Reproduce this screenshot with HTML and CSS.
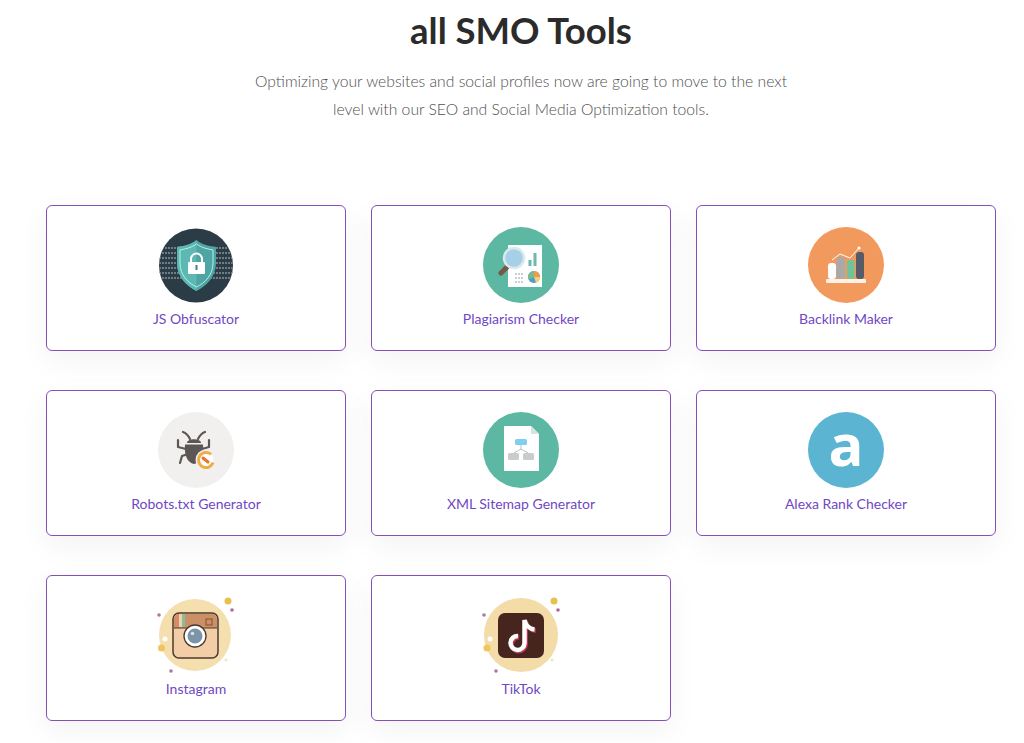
FILE: index.html
```html
<!DOCTYPE html>
<html lang="en">
  <head>
    <meta charset="utf-8" />
    <title>all SMO Tools</title>
    <link rel="stylesheet" href="styles.css">
  </head>
  <body>
    <div class="container">
      <div class="header">
        <h1>all SMO Tools</h1>
        <p>Optimizing your websites and social profiles now are going to move to the next<br />level with our SEO and Social Media Optimization tools.</p>
      </div>

      <div class="content">
        <a class="card" href="#">
          <svg class="icon" viewBox="0 0 80 80">
            <defs><clipPath id="disc"><circle cx="40" cy="40.5" r="37" /></clipPath></defs>
            <circle cx="40" cy="40.5" r="37" fill="#2b3c47" />
            <g clip-path="url(#disc)" stroke="#6f7c84" stroke-width="2" stroke-dasharray="2 1">
              <path d="M3 23H77M3 28H77M3 33H77M3 38H77M3 43H77M3 48H77M3 53H77" />
            </g>
            <path d="M40.5 15 C46 20 54 21 60 22 V38 C60 52 50 61 40.5 66 C31 61 21 52 21 38 V22 C27 21 35 20 40.5 15Z" fill="#4fa5a3" />
            <path d="M40.5 15 C35 20 27 21 21 22 V38 C21 52 31 61 40.5 66Z" fill="#5cb8b3" />
            <path d="M40.5 19 C46 23 52 24 57 25 V38 C57 50 49 58 40.5 62 C32 58 24 50 24 38 V25 C29 24 35 23 40.5 19Z" fill="none" stroke="#b5f0ea" stroke-width="1" />
            <path d="M35 37 V34 a5.5 5.5 0 0 1 11 0 V37" fill="none" stroke="#fff" stroke-width="2" />
            <rect x="32" y="37" width="17" height="12" rx="1" fill="#fff" />
            <rect x="39.5" y="40" width="2" height="5" fill="#4a7f80" />
          </svg>
          <span>JS Obfuscator</span>
        </a>

        <a class="card" href="#">
          <svg class="icon" viewBox="0 0 80 80">
            <circle cx="40" cy="40" r="38" fill="#5cb8a2" />
            <rect x="27" y="20" width="34" height="42" fill="#fff" />
            <path d="M20 48 L27 41" stroke="#75584a" stroke-width="5" stroke-linecap="round" />
            <circle cx="33" cy="33" r="10" fill="#a6cfe8" stroke="#dbe8ee" stroke-width="2.5" />
            <path d="M49 41V35M54 41V28" stroke="#6fb8ac" stroke-width="3" />
            <path d="M34 49H43M34 53H43M34 57H43" stroke="#b9c2c6" stroke-width="1.5" stroke-dasharray="2 1" />
            <circle cx="53" cy="52" r="6" fill="#4e9ecb" />
            <path d="M53 52V46A6 6 0 0 1 59 52Z" fill="#f09a4e" />
            <path d="M53 52H59A6 6 0 0 1 55 57.6Z" fill="#f3d36b" />
            <path d="M53 52L47.5 54.5A6 6 0 0 1 47 52A6 6 0 0 1 53 46Z" fill="#7cb98c" />
          </svg>
          <span>Plagiarism Checker</span>
        </a>

        <a class="card" href="#">
          <svg class="icon" viewBox="0 0 80 80">
            <circle cx="40" cy="40" r="38" fill="#f29a5e" />
            <rect x="22" y="38" width="8" height="16" rx="3" fill="#fff" />
            <rect x="30.5" y="32" width="8.5" height="22" rx="3" fill="#a9a9a9" />
            <rect x="41" y="35" width="7.5" height="19" rx="3" fill="#6fc59b" />
            <rect x="50" y="27" width="8" height="27" rx="3" fill="#565b67" />
            <rect x="20" y="54" width="40" height="4" rx="1" fill="#fff1e4" />
            <path d="M26 35 L34 29 L44 33 L53 23" fill="none" stroke="#fff" stroke-width="1" />
            <circle cx="53" cy="23" r="1.6" fill="#fff" />
          </svg>
          <span>Backlink Maker</span>
        </a>

        <a class="card" href="#">
          <svg class="icon" viewBox="0 0 80 80">
            <circle cx="40" cy="40" r="38" fill="#f1f0ee" />
            <g fill="none" stroke="#5c5654" stroke-width="2.2" stroke-linecap="round" stroke-linejoin="round">
              <path d="M34 29 C32 25 30 23 27 22" />
              <path d="M42 29 C44 25 46 23 49 22" />
              <path d="M30 39 L22 37 L22 30" />
              <path d="M46 39 L53 37 L53 30" />
              <path d="M32 44 L26 46 L24 53" />
            </g>
            <path d="M31 33 C31 28 45 28 45 33Z" fill="#5c5654" />
            <path d="M29 34.5 H47 C48 44 45 53 38 54 C31 53 28 44 29 34.5Z" fill="#5c5654" />
            <circle cx="50" cy="50" r="10.5" fill="#f1f0ee" />
            <circle cx="50" cy="50" r="7.5" fill="#fff" stroke="#f2ab4a" stroke-width="3" stroke-dasharray="38 9" transform="rotate(20 50 50)" />
            <path d="M47 48 L52 52" stroke="#e5772c" stroke-width="3" stroke-linecap="round" />
          </svg>
          <span>Robots.txt Generator</span>
        </a>

        <a class="card" href="#">
          <svg class="icon" viewBox="0 0 80 80">
            <circle cx="40" cy="40" r="38" fill="#5cb8a2" />
            <path d="M23 16 H50 L58 24 V61 H23Z" fill="#fff" />
            <path d="M50 16 L58 24 H50Z" fill="#d6e4e0" />
            <path d="M40 35 V39 M40 39 L33 43 M40 39 L47 43" stroke="#b8bfc0" stroke-width="1" fill="none" />
            <rect x="34" y="29" width="12" height="6" rx="1.5" fill="#80cff0" />
            <rect x="27" y="43" width="11" height="7" rx="1.5" fill="#c9cccb" />
            <rect x="42" y="43" width="11" height="7" rx="1.5" fill="#c9cccb" />
          </svg>
          <span>XML Sitemap Generator</span>
        </a>

        <a class="card" href="#">
          <div class="alexa">a</div>
          <span>Alexa Rank Checker</span>
        </a>

        <a class="card" href="#">
          <svg class="icon" viewBox="0 0 80 80">
            <circle cx="39" cy="40" r="36" fill="#f5dfae" />
            <circle cx="72" cy="6" r="3.5" fill="#e8c04f" />
            <circle cx="76" cy="15" r="1.8" fill="#b06a93" />
            <circle cx="3" cy="20" r="1.8" fill="#a9799f" />
            <circle cx="9" cy="44" r="2.5" fill="#fff" />
            <circle cx="5.5" cy="53" r="3.5" fill="#eec65c" />
            <circle cx="15" cy="76" r="1.8" fill="#a9799f" />
            <circle cx="70" cy="65" r="1.6" fill="#ece7c9" />
            <rect x="17" y="18" width="45" height="45" rx="6" fill="#f3cda8" stroke="#4c3a30" stroke-width="1.5" />
            <path d="M18 30 V24 A5 5 0 0 1 23 19 H56 A5 5 0 0 1 61 24 V33 H18Z" fill="#cb9066" />
            <rect x="20" y="19" width="3" height="13" fill="#d98a6c" />
            <rect x="23" y="19" width="3" height="13" fill="#e8d6a6" />
            <rect x="26" y="19" width="3" height="13" fill="#8dbb9f" />
            <path d="M18 33 H61" stroke="#4c3a30" stroke-width="1" />
            <rect x="50" y="24" width="6" height="6" fill="none" stroke="#7c5236" stroke-width="1" />
            <circle cx="39" cy="41" r="11" fill="#fff" stroke="#4c3a30" stroke-width="1.3" />
            <circle cx="39" cy="41" r="7.5" fill="#7d94a8" />
            <circle cx="36.5" cy="38.5" r="1.8" fill="#d7e0e6" />
          </svg>
          <span>Instagram</span>
        </a>

        <a class="card" href="#">
          <svg class="icon" viewBox="0 0 80 80">
            <circle cx="40" cy="40" r="37" fill="#f3dca8" />
            <circle cx="73" cy="6" r="3.5" fill="#e8c04f" />
            <circle cx="77" cy="15" r="1.8" fill="#b06a93" />
            <circle cx="3" cy="20" r="1.8" fill="#a9799f" />
            <circle cx="9" cy="44" r="2.5" fill="#fff" />
            <circle cx="6" cy="53" r="3.5" fill="#eec65c" />
            <circle cx="15" cy="76" r="1.8" fill="#a9799f" />
            <circle cx="71" cy="65" r="1.6" fill="#ece7c9" />
            <rect x="17" y="18" width="46" height="45" rx="7" fill="#47251f" />
            <g fill="none" stroke-width="4.5">
              <path d="M37 41 a7 7 0 1 0 6.5 7 V25 c1 5 5 9 10 9.5" stroke="#c0395a" transform="translate(1.2 1.2)" />
              <path d="M37 41 a7 7 0 1 0 6.5 7 V25 c1 5 5 9 10 9.5" stroke="#fff" />
            </g>
          </svg>
          <span>TikTok</span>
        </a>
      </div>
    </div>
  </body>
</html>
```

FILE: styles.css
```css
* {
  margin: 0;
  box-sizing: border-box;
}
body {
  font-family: "Lato", "Open Sans", sans-serif;
  background-color: white;
}
.container {
  width: 950px;
  margin-left: 46px;
  padding-top: 10px;
  padding-bottom: 22px;
}
.header {
  text-align: center;
  height: 195px;
}
.header h1 {
  font-size: 36.5px;
  line-height: 40px;
  font-weight: 700;
  color: #2b2b2b;
}
.header p {
  margin-top: 17px;
  font-size: 15.7px;
  font-weight: 300;
  line-height: 28px;
  color: #4f4f4f;
}
.content {
  display: grid;
  grid-template-columns: 300px 300px 300px;
  column-gap: 25px;
  row-gap: 39px;
}
.card {
  display: flex;
  flex-direction: column;
  align-items: center;
  height: 146px;
  padding-top: 19px;
  border: 1px solid #8450b8;
  border-radius: 6px;
  background-color: white;
  box-shadow: 0 10px 30px rgba(0, 0, 0, 0.05);
  text-decoration: none;
}
.icon {
  width: 80px;
  height: 80px;
  filter: blur(0.3px);
}
.alexa {
  width: 76px;
  height: 76px;
  margin: 2px;
  border-radius: 50%;
  background-color: #5ab4d2;
  color: white;
  font-family: "Open Sans", sans-serif;
  font-size: 58px;
  font-weight: 700;
  line-height: 63px;
  text-align: center;
}
.card span {
  margin-top: 4px;
  font-size: 14px;
  line-height: 20px;
  color: #7048c4;
}
```
